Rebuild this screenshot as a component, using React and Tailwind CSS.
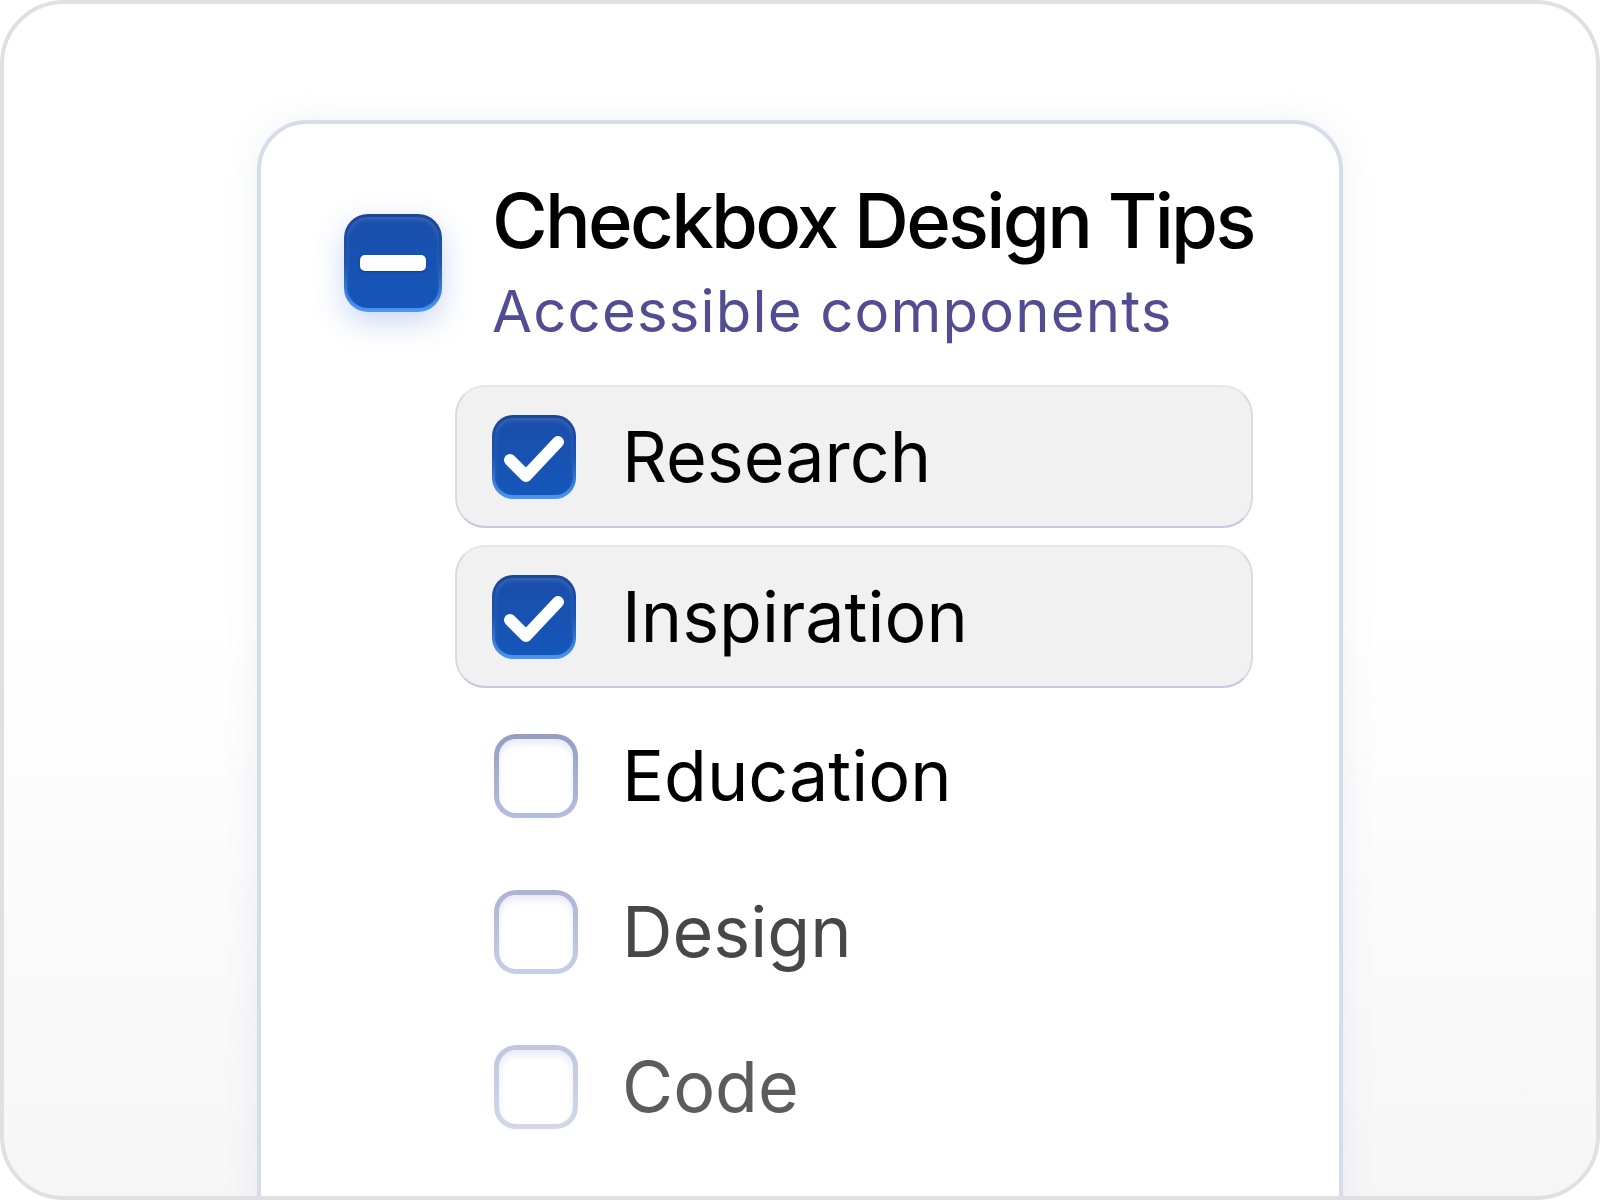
import React from 'react';

const CheckMark = () => (
  <svg width="84" height="84" viewBox="0 0 84 84" className="absolute -left-[3px] -top-[3px]">
    <path d="M18 45 L34 61 L66 27" fill="none" stroke="#ffffff" strokeWidth="12" strokeLinecap="round" strokeLinejoin="round" />
  </svg>
);

const CheckedBox = () => (
  <div className="w-[84px] h-[84px] shrink-0 rounded-[21px] p-[3px] pb-[4px] bg-linear-to-b from-[#1c4596] via-[#1d55b0] to-[#4d98f0]">
    <div className="relative w-full h-full rounded-[18px] bg-linear-to-b from-[#1a4eaa] to-[#1456b9] shadow-[inset_0_3px_4px_rgba(255,255,255,0.12)]">
      <CheckMark />
    </div>
  </div>
);

const EmptyBox = ({ frame }) => (
  <div className={`w-[84px] h-[84px] shrink-0 rounded-[22px] p-[5px] bg-linear-to-b ${frame}`}>
    <div className="w-full h-full rounded-[17px] bg-white shadow-[inset_0_5px_7px_rgba(190,195,230,0.35)]" />
  </div>
);

const rows = [
  { label: 'Research', checked: true },
  { label: 'Inspiration', checked: true },
  { label: 'Education', text: 'text-black', frame: 'from-[#949ec4] to-[#b5bde0]', h: 'h-[141px]' },
  { label: 'Design', text: 'text-[#474747]', frame: 'from-[#acb4d2] to-[#c8cee6]', h: 'h-[138px]' },
  { label: 'Code', text: 'text-[#5c5c5c]', frame: 'from-[#c1c7dc] to-[#d2d7ea]', h: 'h-[138px]' },
];

export default function App() {
  return (
    <div className="w-[1600px] h-[1200px] bg-white" style={{ fontFamily: 'Inter, "Noto Sans", sans-serif' }}>
      <div className="w-full h-full rounded-[64px] border-4 border-[#e0e0e0] overflow-hidden bg-linear-to-b from-white via-white to-[#f6f6f7] pt-[116px]">
        {/* Card */}
        <div className="mx-auto w-[1086px] h-[1200px] rounded-[50px] border-4 border-[#d6dcea] bg-white shadow-[0_0_30px_rgba(150,160,200,0.15)] pt-[58px] pl-[83px]">
          {/* Header */}
          <div className="flex items-center gap-[50px]">
            <div className="w-[98px] h-[98px] mt-[4px] shrink-0 rounded-[24px] p-[3px] pb-[4px] bg-linear-to-b from-[#1c4596] via-[#1d55b0] to-[#4d98f0] shadow-[0_10px_30px_rgba(40,90,210,0.25)]">
              <div className="w-full h-full rounded-[21px] bg-linear-to-b from-[#1a4eaa] to-[#1456b9] flex items-center justify-center shadow-[inset_0_3px_4px_rgba(255,255,255,0.12)]">
                <div className="w-[66px] h-[16px] rounded-[5px] bg-white shadow-[0_1px_2px_rgba(0,0,40,0.3)]" />
              </div>
            </div>
            <div className="flex flex-col gap-[24px]">
              <h1 className="text-[76px] leading-none font-medium text-black tracking-[-2.7px]">Checkbox Design Tips</h1>
              <p className="text-[58px] leading-none text-[#524d92] tracking-[1.2px]">Accessible components</p>
            </div>
          </div>

          {/* Options */}
          <div className="ml-[111px] mt-[45px] w-[798px] flex flex-col gap-[17px]">
            {rows.map((r) =>
              r.checked ? (
                <div key={r.label} className="h-[143px] flex items-center gap-[46px] pl-[35px] rounded-[30px] border-2 border-[#e6e8ee] border-b-[#c4cbdd] border-l-[#d6dbe6] border-r-[#d6dbe6] bg-[#f1f1f2]">
                  <CheckedBox />
                  <span className="text-[70px] leading-none text-black">{r.label}</span>
                </div>
              ) : (
                <div key={r.label} className={`${r.h} flex items-center gap-[44px] pl-[39px]`}>
                  <EmptyBox frame={r.frame} />
                  <span className={`text-[70px] leading-none ${r.text}`}>{r.label}</span>
                </div>
              )
            )}
          </div>
        </div>
      </div>
    </div>
  );
}
